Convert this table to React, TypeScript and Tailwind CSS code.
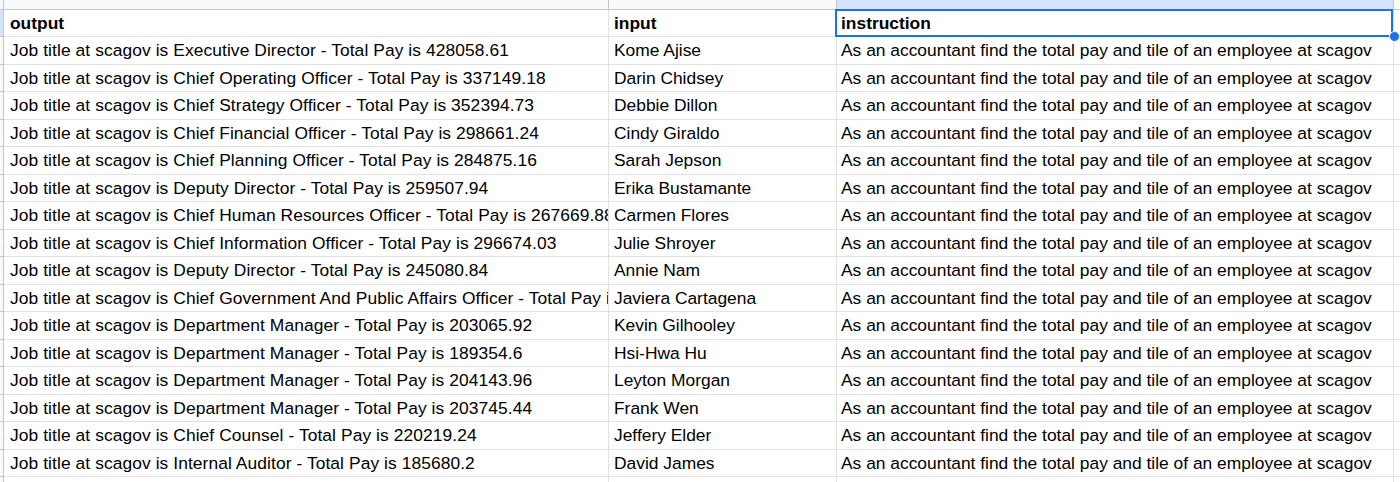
import React from 'react';

interface Row {
  output: string;
  input: string;
}

const instruction = 'As an accountant find the total pay and tile of an employee at scagov';

const rows: Row[] = [
  { output: 'Job title at scagov is Executive Director - Total Pay is 428058.61', input: 'Kome Ajise' },
  { output: 'Job title at scagov is Chief Operating Officer - Total Pay is 337149.18', input: 'Darin Chidsey' },
  { output: 'Job title at scagov is Chief Strategy Officer - Total Pay is 352394.73', input: 'Debbie Dillon' },
  { output: 'Job title at scagov is Chief Financial Officer - Total Pay is 298661.24', input: 'Cindy Giraldo' },
  { output: 'Job title at scagov is Chief Planning Officer - Total Pay is 284875.16', input: 'Sarah Jepson' },
  { output: 'Job title at scagov is Deputy Director - Total Pay is 259507.94', input: 'Erika Bustamante' },
  { output: 'Job title at scagov is Chief Human Resources Officer - Total Pay is 267669.88', input: 'Carmen Flores' },
  { output: 'Job title at scagov is Chief Information Officer - Total Pay is 296674.03', input: 'Julie Shroyer' },
  { output: 'Job title at scagov is Deputy Director - Total Pay is 245080.84', input: 'Annie Nam' },
  { output: 'Job title at scagov is Chief Government And Public Affairs Officer - Total Pay is 279433.1', input: 'Javiera Cartagena' },
  { output: 'Job title at scagov is Department Manager - Total Pay is 203065.92', input: 'Kevin Gilhooley' },
  { output: 'Job title at scagov is Department Manager - Total Pay is 189354.6', input: 'Hsi-Hwa Hu' },
  { output: 'Job title at scagov is Department Manager - Total Pay is 204143.96', input: 'Leyton Morgan' },
  { output: 'Job title at scagov is Department Manager - Total Pay is 203745.44', input: 'Frank Wen' },
  { output: 'Job title at scagov is Chief Counsel - Total Pay is 220219.24', input: 'Jeffery Elder' },
  { output: 'Job title at scagov is Internal Auditor - Total Pay is 185680.2', input: 'David James' },
  { output: '', input: '' },
];

const cell = 'h-full shrink-0 overflow-hidden whitespace-nowrap border-r border-b border-[#e1e1e1] flex items-center';

const App: React.FC = () => {
  return (
    <div className="w-[1400px] h-[482px] overflow-hidden bg-white text-[17.4px] text-black" style={{ fontFamily: '"Liberation Sans", Arial, sans-serif' }}>
      {/* column header strip */}
      <div className="flex h-[10px]">
        <div className="w-[4px] h-full shrink-0 bg-[#f8f9fa] border-r border-b border-[#c4c7c5]" />
        <div className="w-[605px] h-full shrink-0 bg-[#f8f9fa] border-r border-b border-[#c4c7c5]" />
        <div className="w-[228px] h-full shrink-0 bg-[#f8f9fa] border-r border-b border-[#c4c7c5]" />
        <div className="w-[557px] h-full shrink-0 bg-[#d3e3fd] border-r border-b border-[#c4c7c5]" />
        <div className="flex-1 h-full bg-[#f8f9fa] border-b border-[#c4c7c5]" />
      </div>

      {/* header row */}
      <div className="flex h-[27px]">
        <div className="w-[4px] h-full shrink-0 bg-[#d3e3fd] border-r border-b border-[#c4c7c5]" />
        <div className={`${cell} w-[605px] pl-[6px] font-bold`}>output</div>
        <div className={`${cell} w-[228px] pl-[5px] font-bold`}>input</div>
        <div className={`${cell} relative w-[557px] pl-[4px] font-bold overflow-visible`}>
          instruction
          <div className="absolute -left-[2px] -top-px w-[558px] h-[28px] border-2 border-[#1a73e8]" />
          <div className="absolute right-[-7px] bottom-[-6px] w-[11px] h-[11px] rounded-full bg-[#1a73e8] border border-white" />
        </div>
        <div className="flex-1 h-full border-b border-[#e1e1e1]" />
      </div>

      {rows.map((row, i) => (
        <div key={i} className={`flex ${i % 2 === 0 ? 'h-[28px]' : 'h-[27px]'}`}>
          <div className="w-[4px] h-full shrink-0 bg-[#f8f9fa] border-r border-b border-[#c4c7c5]" />
          <div className={`${cell} w-[605px] pl-[6px] tracking-[0.08px]`}>{row.output}</div>
          <div className={`${cell} w-[228px] pl-[5px]`}>{row.input}</div>
          <div className={`${cell} w-[557px] pl-[4px]`}>{row.output ? instruction : ''}</div>
          <div className="flex-1 h-full border-b border-[#e1e1e1]" />
        </div>
      ))}
    </div>
  );
};

export default App;
